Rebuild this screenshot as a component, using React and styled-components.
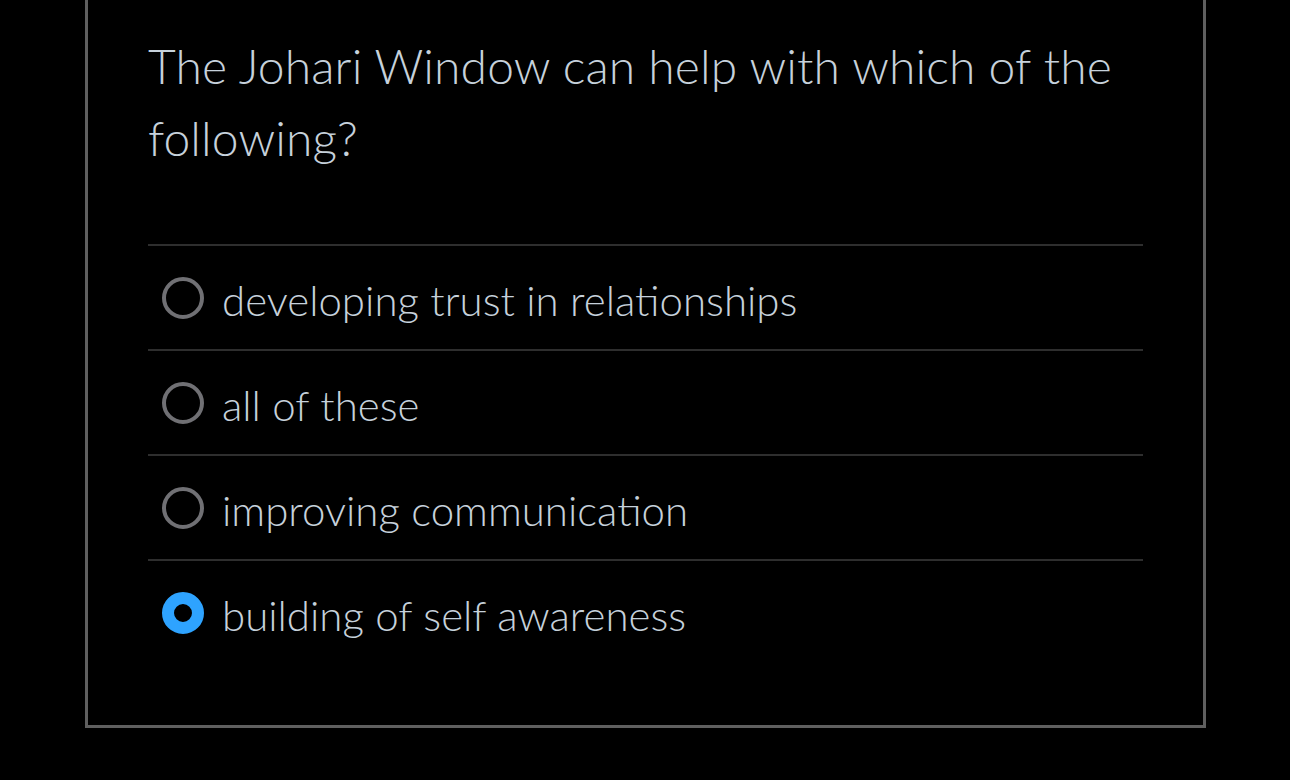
import React, { useState } from "react";
import styled, { createGlobalStyle } from "styled-components";

const GlobalStyle = createGlobalStyle`
  html, body {
    margin: 0;
    padding: 0;
    background: #000;
  }
  body {
    font-family: Lato, "Open Sans", sans-serif;
  }
`;

const Page = styled.div`
  width: 1290px;
  height: 780px;
  background: #000;
  overflow: hidden;
`;

const Card = styled.div`
  margin-left: 85px;
  width: 1121px;
  box-sizing: border-box;
  border: 3px solid #5f5f5f;
  border-top: none;
  padding: 30px 60px 61px 60px;
`;

const Question = styled.h2`
  margin: 0 0 70px 0;
  font-size: 48px;
  line-height: 72px;
  font-weight: 300;
  letter-spacing: 0.1px;
  color: #c6d1db;
`;

const Options = styled.div`
  display: flex;
  flex-direction: column;
`;

const Option = styled.label`
  display: flex;
  align-items: center;
  gap: 18px;
  height: 103px;
  padding-left: 14px;
  border-top: 2px solid #2e2e2e;
  cursor: pointer;
`;

const Radio = styled.span`
  flex: none;
  width: 42px;
  height: 42px;
  box-sizing: border-box;
  border-radius: 50%;
  border: ${p => (p.checked ? "12.5px solid #2ea3ff" : "4px solid #707074")};
  background: #000;
`;

const Label = styled.span`
  font-size: 42px;
  font-weight: 300;
  color: #c6d1db;
  padding-top: 4px;
`;

const choices = [
  "developing trust in relationships",
  "all of these",
  "improving communication",
  "building of self awareness"
];

export default function App() {
  const [selected, setSelected] = useState(3);
  return (
    <Page>
      <GlobalStyle />
      <Card>
        <Question>
          The Johari Window can help with which of the following?
        </Question>
        <Options>
          {choices.map((c, i) => (
            <Option key={i} onClick={() => setSelected(i)}>
              <Radio checked={selected === i} />
              <Label>{c}</Label>
            </Option>
          ))}
        </Options>
      </Card>
    </Page>
  );
}
